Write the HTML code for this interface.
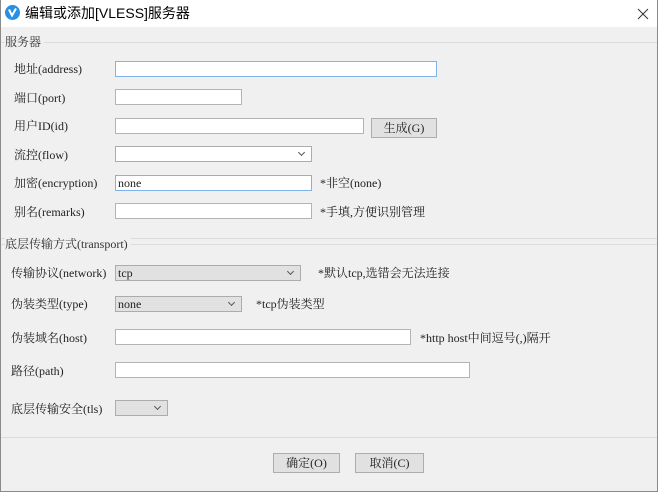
<!DOCTYPE html>
<html><head><meta charset="utf-8"><style>
*{margin:0;padding:0;box-sizing:border-box}
body{width:658px;height:492px;background:#f0f0f0;position:relative;overflow:hidden;font-family:"Liberation Serif","Noto Serif CJK SC",serif;font-size:12px;color:#222}
.a{position:absolute;white-space:nowrap}
.title{position:absolute;left:0;top:0;width:658px;height:27px;background:#fff}
.frame{position:absolute;left:0;top:0;width:658px;height:492px;border:1px solid #8a8a8a;border-top:none;pointer-events:none}
.in{position:absolute;height:16px;background:#fff;border:1px solid #b4b4b4}
.blue{border-color:#7eb4ea}
.sel{position:absolute;height:16px;background:#fff;border:1px solid #acacac}
.sel.g{background:#e1e1e1}
.sel::after{content:"";position:absolute;right:7px;top:3px;width:4px;height:4px;border-right:1px solid #555;border-bottom:1px solid #555;transform:rotate(45deg)}
.btn{position:absolute;height:20px;background:#e1e1e1;border:1px solid #adadad;text-align:center;line-height:18px}
.line{position:absolute;height:1px;background:#dcdcdc}
.lbl{position:absolute;white-space:nowrap;line-height:14px}
.v{position:absolute;left:2px;top:0;line-height:14px}
</style></head><body>
<div class="title"></div>
<svg class="a" style="left:5px;top:5px" width="15" height="15" viewBox="0 0 15 15"><circle cx="7.5" cy="7.5" r="7.5" fill="#2a8fe0"/><path d="M4 4.5 L7 10.5 L11 3.5" stroke="#fff" stroke-width="2" fill="none"/></svg>
<div class="a" style="left:25px;top:5px;font-family:'Liberation Sans','Noto Sans CJK SC',sans-serif;font-size:14px;line-height:17px;color:#000">编辑或添加[VLESS]服务器</div>
<svg class="a" style="left:637px;top:8px" width="12" height="12"><path d="M1 1L11 11M11 1L1 11" stroke="#333" stroke-width="1"/></svg>

<div class="line" style="left:0;top:42px;width:658px"></div>
<div class="lbl" style="left:5px;top:35px;background:#f0f0f0;padding-right:3px;color:#333">服务器</div>

<div class="lbl" style="left:14px;top:62px">地址(address)</div>
<div class="in blue" style="left:115px;top:61px;width:322px"></div>
<div class="lbl" style="left:14px;top:91px">端口(port)</div>
<div class="in" style="left:115px;top:89px;width:127px"></div>
<div class="lbl" style="left:14px;top:119px">用户ID(id)</div>
<div class="in" style="left:115px;top:118px;width:249px"></div>
<div class="btn" style="left:371px;top:118px;width:66px">生成(G)</div>
<div class="lbl" style="left:14px;top:148px">流控(flow)</div>
<div class="sel" style="left:115px;top:146px;width:197px"></div>
<div class="lbl" style="left:14px;top:176px">加密(encryption)</div>
<div class="in blue" style="left:115px;top:175px;width:197px"><span class="v">none</span></div>
<div class="lbl" style="left:320px;top:176px">*非空(none)</div>
<div class="lbl" style="left:14px;top:205px">别名(remarks)</div>
<div class="in" style="left:115px;top:203px;width:197px"></div>
<div class="lbl" style="left:320px;top:205px">*手填,方便识别管理</div>

<div class="line" style="left:0;top:238px;width:658px"></div>
<div class="line" style="left:0;top:244px;width:658px"></div>
<div class="lbl" style="left:5px;top:237px;background:#f0f0f0;padding-right:3px;color:#333">底层传输方式(transport)</div>

<div class="lbl" style="left:11px;top:266px">传输协议(network)</div>
<div class="sel g" style="left:115px;top:265px;width:186px"><span class="v">tcp</span></div>
<div class="lbl" style="left:318px;top:266px">*默认tcp,选错会无法连接</div>
<div class="lbl" style="left:11px;top:297px">伪装类型(type)</div>
<div class="sel g" style="left:115px;top:296px;width:127px"><span class="v">none</span></div>
<div class="lbl" style="left:256px;top:297px">*tcp伪装类型</div>
<div class="lbl" style="left:11px;top:331px">伪装域名(host)</div>
<div class="in" style="left:115px;top:329px;width:296px"></div>
<div class="lbl" style="left:420px;top:331px">*http host中间逗号(,)隔开</div>
<div class="lbl" style="left:11px;top:364px">路径(path)</div>
<div class="in" style="left:115px;top:362px;width:355px"></div>
<div class="lbl" style="left:11px;top:402px">底层传输安全(tls)</div>
<div class="sel g" style="left:115px;top:400px;width:53px"></div>

<div class="line" style="left:0;top:437px;width:658px"></div>
<div class="btn" style="left:273px;top:453px;width:67px">确定(O)</div>
<div class="btn" style="left:355px;top:453px;width:69px">取消(C)</div>
<div class="frame"></div>
</body></html>
